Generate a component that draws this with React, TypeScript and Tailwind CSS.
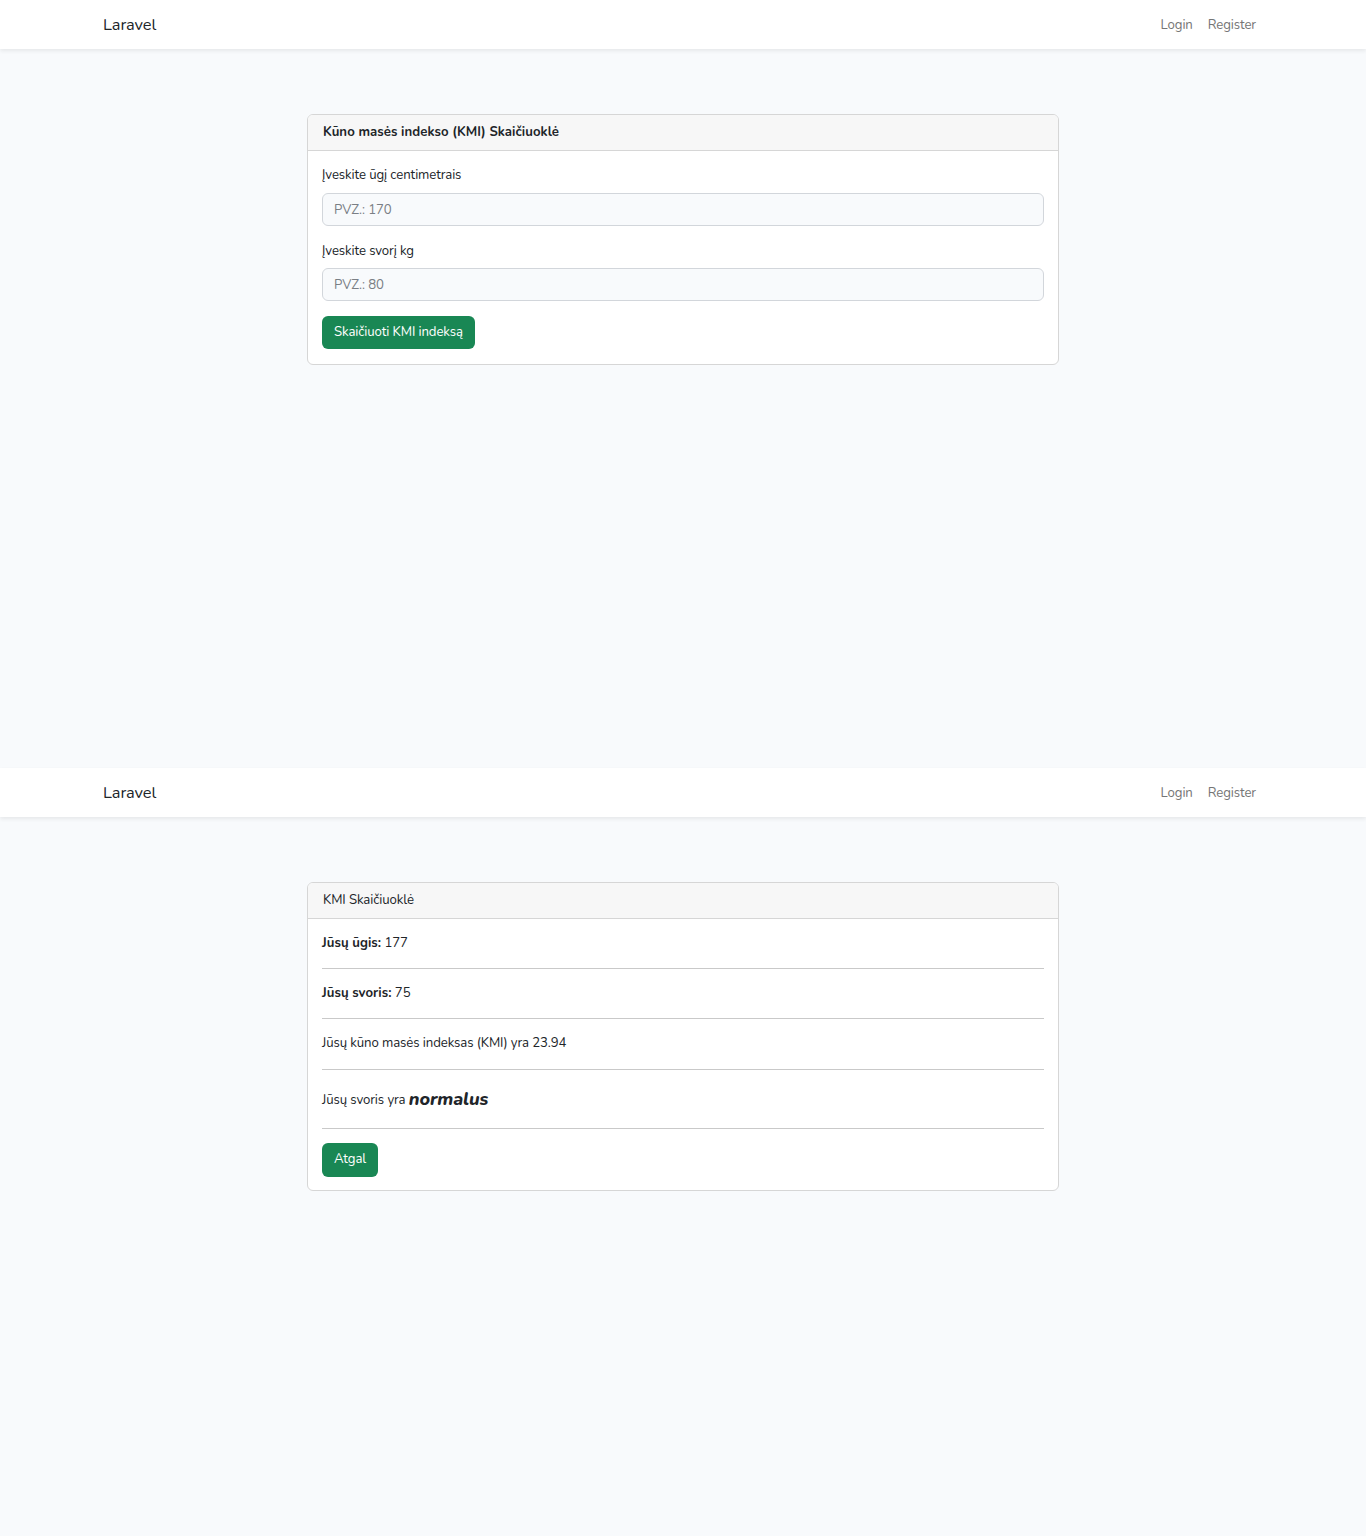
import React from "react";

const font = { fontFamily: "Nunito, Lato, 'Noto Sans', sans-serif" };

const Navbar: React.FC = () => (
  <nav className="h-[49px] bg-white shadow-[0_2px_4px_rgba(0,0,0,0.075)] relative z-10">
    <div className="h-full flex items-center justify-between pl-[103px] pr-[110px]">
      <a className="text-[16.4px] tracking-[-0.1px] text-[#212529] leading-[27px]">Laravel</a>
      <div className="flex items-center gap-[15px] pt-[2px] text-[13.2px] text-[#757575]">
        <a>Login</a>
        <a>Register</a>
      </div>
    </div>
  </nav>
);

const Card: React.FC<{ title: React.ReactNode; children: React.ReactNode }> = ({ title, children }) => (
  <div className="w-[752px] mx-auto bg-white border border-[#d6d6d6] rounded-[6px] overflow-hidden">
    <div className="h-[36px] flex items-center px-[15px] bg-[#f7f7f7] border-b border-[#d6d6d6]">
      {title}
    </div>
    {children}
  </div>
);

const Hr = () => <div className="h-px bg-[#c9c9c9]" />;

const FormScreen = () => (
  <div className="h-[768px] bg-[#f8fafc]">
    <Navbar />
    <div className="pt-[65px]">
      <Card title={<span className="font-bold tracking-[0.05px]">Kūno masės indekso (KMI) Skaičiuoklė</span>}>
        <div className="px-[14px] pt-[13px] pb-[15px]">
          <label className="block leading-[23px] mb-[6px]">Įveskite ūgį centimetrais</label>
          <input
            className="w-full h-[33px] px-[11px] bg-[#f8fafc] border border-[#d2d6db] rounded-[6px] outline-none placeholder:text-[#7a7f85]"
            placeholder="PVZ.: 170"
          />
          <label className="block leading-[23px] mt-[14px] mb-[5px]">Įveskite svorį kg</label>
          <input
            className="w-full h-[33px] px-[11px] bg-[#f8fafc] border border-[#d2d6db] rounded-[6px] outline-none placeholder:text-[#7a7f85]"
            placeholder="PVZ.: 80"
          />
          <button className="mt-[15px] h-[33px] px-[12px] bg-[#198754] text-white rounded-[6px]">
            Skaičiuoti KMI indeksą
          </button>
        </div>
      </Card>
    </div>
  </div>
);

const ResultScreen = () => (
  <div className="h-[768px] bg-[#f8fafc]">
    <Navbar />
    <div className="pt-[65px]">
      <Card title={<span>KMI Skaičiuoklė</span>}>
        <div className="px-[14px] pt-[13px] pb-[13px]">
          <div className="leading-[23px] mb-[13px]">
            <b className="tracking-[0.05px]">Jūsų ūgis:</b> 177
          </div>
          <Hr />
          <div className="leading-[23px] my-[13px]">
            <b className="tracking-[0.05px]">Jūsų svoris:</b> 75
          </div>
          <Hr />
          <div className="leading-[23px] mt-[13px] mb-[14px]">Jūsų kūno masės indeksas (KMI) yra 23.94</div>
          <Hr />
          <div className="h-[30px] flex items-center my-[14px] leading-[23px]">
            <span className="pt-[3px]">Jūsų svoris yra&nbsp;</span>
            <i className="font-extrabold text-[18px] leading-[28px]">normalus</i>
          </div>
          <Hr />
          <button className="mt-[14px] h-[34px] px-[12px] bg-[#198754] text-white rounded-[6px]">Atgal</button>
        </div>
      </Card>
    </div>
  </div>
);

export default function App() {
  return (
    <div className="text-[13.2px] tracking-[-0.1px] text-[#212529]" style={font}>
      <FormScreen />
      <ResultScreen />
    </div>
  );
}
